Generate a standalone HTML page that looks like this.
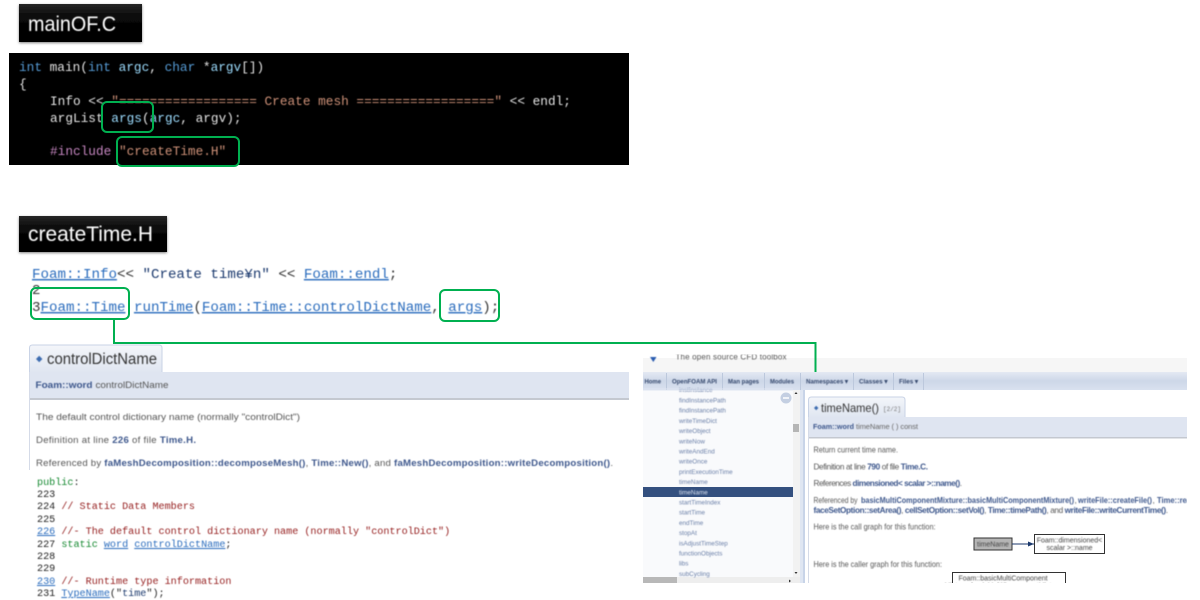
<!DOCTYPE html>
<html><head><meta charset="utf-8"><style>
html,body{margin:0;padding:0;background:#fff;width:1200px;height:600px;overflow:hidden}
svg{display:block}
.m{font-family:"Liberation Mono",monospace;white-space:pre}
.s{font-family:"Liberation Sans",sans-serif}
.b{filter:blur(.45px)}
.bb{filter:blur(.6px)}
.l{fill:#2a6cbd;text-decoration:underline}
.k{fill:#569cd6}.st{fill:#ce9178}
.d{font-size:9.6px;fill:#555}
.h{font-weight:bold;fill:#3d578c}
.t{font-size:6.3px;fill:#6a7fa8}
.n{font-size:6.4px;font-weight:bold;fill:#36496e}
.c{font-size:8.2px;fill:#555}
.cb{font-size:8.2px;font-weight:bold;fill:#3d578c}
.r{fill:#962020}.g{fill:#178a32}.x{fill:#222}
</style></head><body>
<svg width="1200" height="600" viewBox="0 0 1200 600" xmlns="http://www.w3.org/2000/svg">
<defs>
<linearGradient id="lab" x1="0" y1="0" x2="0" y2="1"><stop offset="0" stop-color="#262626"/><stop offset=".35" stop-color="#080808"/><stop offset="1" stop-color="#000"/></linearGradient>
<linearGradient id="nav" x1="0" y1="0" x2="0" y2="1"><stop offset="0" stop-color="#e4e9f3"/><stop offset=".5" stop-color="#cdd7e8"/><stop offset="1" stop-color="#d9e1ef"/></linearGradient>
<linearGradient id="tab" x1="0" y1="0" x2="0" y2="1"><stop offset="0" stop-color="#f4f6fa"/><stop offset="1" stop-color="#e0e6f1"/></linearGradient>
<filter id="sh" x="-10%" y="-10%" width="120%" height="130%"><feDropShadow dx="0" dy="1" stdDeviation="1.3" flood-color="#000" flood-opacity=".5"/></filter>
<clipPath id="tag"><rect x="643" y="354.500" width="544" height="20"/></clipPath>
</defs>

<!-- labels -->
<rect x="19" y="4" width="123" height="38" fill="url(#lab)" filter="url(#sh)"/>
<text class="s b" x="28" y="31" font-size="21" fill="#fff" textLength="88" lengthAdjust="spacingAndGlyphs">mainOF.C</text>
<rect x="19" y="216" width="148" height="36" fill="url(#lab)" filter="url(#sh)"/>
<text class="s b" x="28" y="241" font-size="21" fill="#fff" textLength="125" lengthAdjust="spacingAndGlyphs">createTime.H</text>

<!-- code block -->
<rect x="9" y="53" width="620" height="112" fill="#000"/>
<g class="m b" font-size="12.77" fill="#e4e4e4">
<text x="19" y="71"><tspan class="k">int</tspan> main(<tspan class="k">int</tspan> <tspan fill="#9cdcfe">argc</tspan>, <tspan class="k">char</tspan> *<tspan fill="#9cdcfe">argv</tspan>[])</text>
<text x="19" y="88">{</text>
<text x="50" y="105">Info &lt;&lt; <tspan class="st">"================== Create mesh =================="</tspan> &lt;&lt; endl;</text>
<text x="50" y="122">argList <tspan fill="#9cdcfe">args</tspan>(<tspan fill="#9cdcfe">argc</tspan>, argv);</text>
<text x="50" y="155"><tspan fill="#c586c0">#include</tspan> <tspan class="st">"createTime.H"</tspan></text>
</g>

<!-- createTime code -->
<g class="m b" font-size="14.17" fill="#333">
<text x="32" y="278"><tspan class="l">Foam::Info</tspan>&lt;&lt; <tspan fill="#1c3a6e">"Create time¥n"</tspan> &lt;&lt; <tspan class="l">Foam::endl</tspan>;</text>
<text x="32" y="294">2</text>
<text x="32" y="311">3<tspan class="l">Foam::Time</tspan> <tspan class="l">runTime</tspan>(<tspan class="l">Foam::Time::controlDictName</tspan>, <tspan class="l">args</tspan>);</text>
</g>

<!-- controlDictName doc -->
<rect x="29" y="372" width="600" height="26" fill="#dfe5f1"/>
<rect x="29" y="398" width="600" height="2" fill="#c4c8d0"/>
<rect x="29" y="372" width="1" height="98" fill="#d5dbe8"/>
<path d="M29.500 372V348q0-3 3-3H159q3 0 3 3v24" fill="url(#tab)" stroke="#c9d3e6"/>
<g class="s b">
<path d="M36 359l3.200-3.200 3.200 3.200-3.200 3.200z" fill="#3d6cb0"/>
<text x="47" y="364" font-size="15.4" fill="#333" textLength="110" lengthAdjust="spacingAndGlyphs">controlDictName</text>
<text x="35.500" y="388" font-size="9.6" fill="#3d578c" font-weight="bold" textLength="57" lengthAdjust="spacingAndGlyphs">Foam::word</text>
<text x="95.500" y="388" class="d" textLength="73" lengthAdjust="spacingAndGlyphs">controlDictName</text>
<text x="36" y="420" class="d" textLength="264" lengthAdjust="spacingAndGlyphs">The default control dictionary name (normally "controlDict")</text>
<text x="36" y="443" class="d" textLength="160" lengthAdjust="spacing">Definition at line <tspan class="h">226</tspan> of file <tspan class="h">Time.H.</tspan></text>
<text x="36" y="466" class="d" textLength="577" lengthAdjust="spacing">Referenced by <tspan class="h">faMeshDecomposition::decomposeMesh()</tspan>, <tspan class="h">Time::New()</tspan>, and <tspan class="h">faMeshDecomposition::writeDecomposition()</tspan>.</text>
</g>
<rect x="0" y="470" width="640" height="130" fill="#fff"/>

<!-- source listing -->
<g class="m b" font-size="10.15" fill="#222">
<text x="37" y="485" class="g">public<tspan class="x">:</tspan></text>
<text x="37" y="497">223</text>
<text x="37" y="509">224 <tspan class="r">// Static Data Members</tspan></text>
<text x="37" y="522">225</text>
<text x="37" y="534"><tspan class="l">226</tspan> <tspan class="r">//- The default control dictionary name (normally "controlDict")</tspan></text>
<text x="37" y="547">227 <tspan class="g">static</tspan> <tspan class="l">word</tspan> <tspan class="l">controlDictName</tspan>;</text>
<text x="37" y="559">228</text>
<text x="37" y="571">229</text>
<text x="37" y="584"><tspan class="l">230</tspan> <tspan class="r">//- Runtime type information</tspan></text>
<text x="37" y="596">231 <tspan class="l">TypeName</tspan>("<tspan fill="#1c3a6e">time</tspan>");</text>
</g>

<!-- right doc -->
<rect x="643" y="358" width="544" height="14" fill="#f6f6f6"/>
<g clip-path="url(#tag)">
<g class="s bb">
<path d="M650 357h6.500l-3.200 5z" fill="#2a5cb0"/>
<text x="675.500" y="359.500" font-size="8" fill="#555" textLength="111" lengthAdjust="spacing">The open source CFD toolbox</text>
</g>
</g>
<rect x="643" y="372" width="544" height="18" fill="url(#nav)"/>
<g fill="#bcc8dc">
<rect x="666" y="373" width="1" height="17"/><rect x="722" y="373" width="1" height="17"/><rect x="764" y="373" width="1" height="17"/><rect x="800" y="373" width="1" height="17"/><rect x="853" y="373" width="1" height="17"/><rect x="893" y="373" width="1" height="17"/><rect x="923" y="373" width="1" height="17"/>
</g>
<g class="s bb">
<text class="n" x="644.500" y="383.500" textLength="16.500" lengthAdjust="spacingAndGlyphs">Home</text>
<text class="n" x="672" y="383.500" textLength="45" lengthAdjust="spacingAndGlyphs">OpenFOAM API</text>
<text class="n" x="728" y="383.500" textLength="31" lengthAdjust="spacingAndGlyphs">Man pages</text>
<text class="n" x="770" y="383.500" textLength="24" lengthAdjust="spacingAndGlyphs">Modules</text>
<text class="n" x="806" y="383.500" textLength="42" lengthAdjust="spacingAndGlyphs">Namespaces ▾</text>
<text class="n" x="859" y="383.500" textLength="28.500" lengthAdjust="spacingAndGlyphs">Classes ▾</text>
<text class="n" x="899" y="383.500" textLength="19" lengthAdjust="spacingAndGlyphs">Files ▾</text>
</g>
<!-- sidebar -->
<rect x="643" y="390" width="150" height="187" fill="#f9fafc"/>
<rect x="793" y="390" width="7" height="193" fill="#f2f2f2"/>
<rect x="793" y="424" width="6" height="8" fill="#b5b5b5"/>
<rect x="800" y="390" width="3" height="193" fill="#dfe6f2"/>
<rect x="803" y="390" width="2" height="193" fill="#c8d4e8"/>
<rect x="643" y="577" width="157" height="6" fill="#eee"/>
<rect x="643" y="577" width="34" height="6" fill="#b8b8b8"/>
<circle cx="786" cy="398" r="5.500" fill="#c4cfe2"/>
<path d="M783 398h6" stroke="#fff" stroke-width="1.500"/>
<path d="M794.500 394l1.500-2 1.500 2zM794.500 572l1.500 2 1.500-2zM789 579.500l2 1.500-2 1.500z" fill="#333"/>
<rect x="643" y="487" width="150" height="10" fill="#34507f"/>
<g class="s bb t">
<text x="679" y="392">instInstance</text>
<text x="679" y="402.500">findInstancePath</text>
<text x="679" y="412.500">findInstancePath</text>
<text x="679" y="423">writeTimeDict</text>
<text x="679" y="433">writeObject</text>
<text x="679" y="443.500">writeNow</text>
<text x="679" y="453.500">writeAndEnd</text>
<text x="679" y="463.500">writeOnce</text>
<text x="679" y="474">printExecutionTime</text>
<text x="679" y="484">timeName</text>
<text x="679" y="494.500" style="fill:#dfe6f3">timeName</text>
<text x="679" y="504.500">startTimeIndex</text>
<text x="679" y="514.500">startTime</text>
<text x="679" y="525">endTime</text>
<text x="679" y="535">stopAt</text>
<text x="679" y="545.500">isAdjustTimeStep</text>
<text x="679" y="555.500">functionObjects</text>
<text x="679" y="565.500">libs</text>
<text x="679" y="576">subCycling</text>
</g>
<rect x="643" y="388" width="150" height="3" fill="#dfe6f2" opacity=".5"/>
<!-- content -->
<rect x="808" y="417" width="379" height="20" fill="#dfe5f1"/>
<rect x="808" y="437" width="379" height="1.500" fill="#c4c8d0"/>
<rect x="808" y="417" width="1" height="166" fill="#d5dbe8"/>
<path d="M808.500 417V400q0-3 3-3H902q3 0 3 3v17" fill="url(#tab)" stroke="#c9d3e6"/>
<g class="s bb">
<path d="M814 408l2.200-2.200 2.200 2.200-2.200 2.200z" fill="#3d6cb0"/>
<text x="821" y="412" font-size="12" fill="#333" textLength="58" lengthAdjust="spacingAndGlyphs">timeName()</text>
<text x="883" y="411" class="m" font-size="6" fill="#777">[2/2]</text>
<text x="813" y="429" font-size="7.500" font-weight="bold" fill="#3d578c" textLength="41" lengthAdjust="spacingAndGlyphs">Foam::word</text>
<text x="856" y="429" font-size="7.500" fill="#666" textLength="62" lengthAdjust="spacing">timeName (  ) const</text>
<text x="813.500" y="452.500" class="c" textLength="84.500" lengthAdjust="spacingAndGlyphs">Return current time name.</text>
<text x="813.500" y="469.500" class="c" textLength="114.500" lengthAdjust="spacing">Definition at line <tspan class="h">790</tspan> of file <tspan class="h">Time.C.</tspan></text>
<text x="813.500" y="486" class="c" textLength="148.500" lengthAdjust="spacing">References <tspan class="h">dimensioned&lt; scalar &gt;::name()</tspan>.</text>
<text x="813.500" y="503" class="c" textLength="44" lengthAdjust="spacingAndGlyphs">Referenced by</text>
<text x="861" y="503" class="cb" textLength="213" lengthAdjust="spacingAndGlyphs">basicMultiComponentMixture::basicMultiComponentMixture()</text>
<text x="1074.500" y="503" class="c">,</text>
<text x="1078" y="503" class="cb" textLength="74" lengthAdjust="spacingAndGlyphs">writeFile::createFile()</text>
<text x="1152.500" y="503" class="c">,</text>
<text x="1157" y="503" class="cb" textLength="34" lengthAdjust="spacingAndGlyphs">Time::rea</text>
<text x="813.500" y="513" class="c" textLength="354.500" lengthAdjust="spacing"><tspan class="h">faceSetOption::setArea()</tspan>, <tspan class="h">cellSetOption::setVol()</tspan>, <tspan class="h">Time::timePath()</tspan>, and <tspan class="h">writeFile::writeCurrentTime()</tspan>.</text>
<text x="813.500" y="529.500" class="c" textLength="122" lengthAdjust="spacingAndGlyphs">Here is the call graph for this function:</text>
<text x="813.500" y="567" class="c" textLength="128.500" lengthAdjust="spacingAndGlyphs">Here is the caller graph for this function:</text>
</g>
<rect x="974" y="538" width="38" height="12" fill="#b5b5b5" stroke="#333"/>
<path d="M1012 544h22" stroke="#1c3a6e"/><path d="M1028 541.500l6 2.500-6 2.500z" fill="#1c3a6e"/>
<rect x="1034.500" y="534.500" width="70" height="19" fill="#fff" stroke="#333"/>
<rect x="952.500" y="572.500" width="113" height="20" fill="#fff" stroke="#333"/>
<g class="s bb" font-size="7" fill="#444" text-anchor="middle">
<text x="993" y="546.500">timeName</text>
<text x="1069.500" y="542.500">Foam::dimensioned&lt;</text>
<text x="1069.500" y="550">scalar &gt;::name</text>
<text x="1003" y="580.500">Foam::basicMultiComponent</text>
<text x="1003" y="588">Mixture::basicMultiComponentMixture</text>
</g>
<rect x="640" y="583" width="560" height="17" fill="#fff"/>
<rect x="1187" y="340" width="13" height="260" fill="#fff"/>

<!-- green annotations -->
<g fill="none" stroke="#00b050" stroke-width="2">
<rect x="102" y="102" width="51" height="30" rx="5"/>
<rect x="117" y="137" width="122" height="29" rx="5"/>
<rect x="31" y="288" width="98" height="31" rx="5"/>
<rect x="440" y="290" width="59" height="31" rx="5"/>
<path d="M114 319V343H815.500V372"/>
</g>
</svg>
</body></html>
